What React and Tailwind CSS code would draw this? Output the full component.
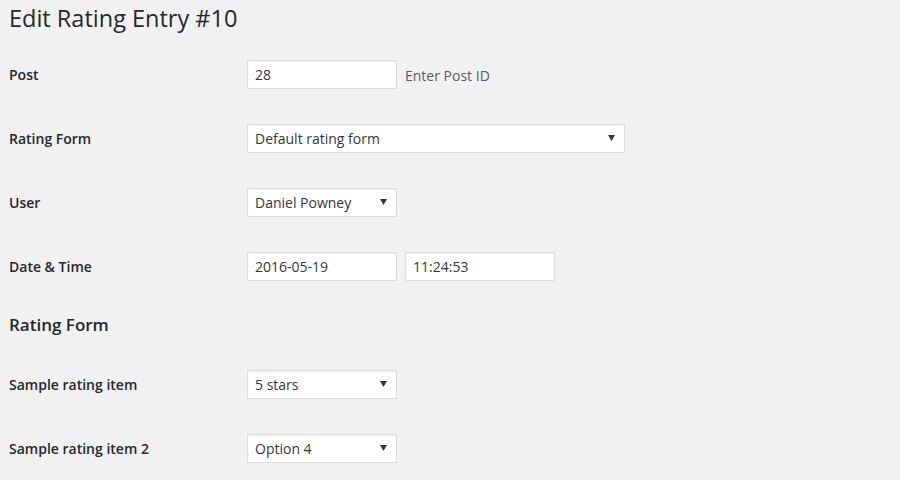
import React from 'react';

const font = { fontFamily: '"Open Sans", "Noto Sans", sans-serif' };

const Arrow = () => (
    <svg width="7" height="6" viewBox="0 0 7 6" className="absolute right-[9px] top-1/2 -translate-y-1/2">
        <path d="M0 0 H7 L3.5 6 Z" fill="#32373c" />
    </svg>
);

const Box = ({ value, width = 'w-[150px]', select = false }) => (
    <div className={`relative ${width} h-[29px] bg-white border border-[#dddddd] shadow-[inset_0_1px_2px_rgba(0,0,0,0.07)] flex items-center pl-[7px] text-[14px] text-[#32373c]`}>
        <span>{value}</span>
        {select && <Arrow />}
    </div>
);

const Row = ({ label, children }) => (
    <div className="flex items-center h-[64px]">
        <div className="w-[238px] text-[14px] font-semibold text-[#23282d]">{label}</div>
        <div className="flex items-center gap-[8px]">{children}</div>
    </div>
);

export default function App() {
    return (
        <div className="w-[900px] h-[480px] overflow-hidden bg-[#f1f1f1] pl-[9px]" style={font}>
            <h1 className="pt-[4px] h-[42px] text-[23.5px] leading-[29px] text-[#23282d] font-normal">
                Edit Rating Entry #10
            </h1>
            <Row label="Post">
                <Box value="28" />
                <span className="text-[14px] text-[#555d66] pt-[2px]">Enter Post ID</span>
            </Row>
            <Row label="Rating Form">
                <Box value="Default rating form" width="w-[378px]" select />
            </Row>
            <Row label="User">
                <Box value="Daniel Powney" select />
            </Row>
            <Row label="Date & Time">
                <Box value="2016-05-19" />
                <Box value="11:24:53" />
            </Row>
            <div className="h-[54px] flex items-center">
                <h2 className="text-[17px] font-semibold text-[#23282d]">Rating Form</h2>
            </div>
            <Row label="Sample rating item">
                <Box value="5 stars" select />
            </Row>
            <Row label="Sample rating item 2">
                <Box value="Option 4" select />
            </Row>
        </div>
    );
}
